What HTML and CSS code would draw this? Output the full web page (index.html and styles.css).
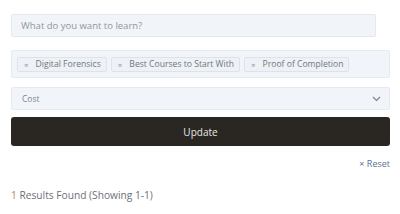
FILE: index.html
```html
<!DOCTYPE html>
<html lang="en">
<head>
    <meta charset="UTF-8">
    <meta name="viewport" content="width=device-width, initial-scale=1.0">
    <title>Courses</title>
    <link rel="stylesheet" href="styles.css">
</head>
<body>
    <div class="filters">
        <input class="search" type="text" placeholder="What do you want to learn?">
        <div class="tags">
            <span class="tag"><span class="x">&times;</span>Digital Forensics</span>
            <span class="tag"><span class="x">&times;</span>Best Courses to Start With</span>
            <span class="tag"><span class="x">&times;</span>Proof of Completion</span>
        </div>
        <div class="select">
            <span>Cost</span>
            <svg width="9" height="6" viewBox="0 0 9 6"><path d="M1 1 L4.5 4.5 L8 1" fill="none" stroke="#7d828b" stroke-width="1.2"/></svg>
        </div>
        <button class="update">Update</button>
        <div class="reset-row"><a class="reset" href="#">&times; Reset</a></div>
        <p class="results"><span class="count">1</span> Results Found (Showing 1-1)</p>
    </div>
</body>
</html>
```

FILE: styles.css
```css
body {
    margin: 0;
    font-family: 'Open Sans', sans-serif;
    background-color: #fff;
    color: #6b7079;
}
.filters {
    padding: 14px 10px 0 11px;
    display: flex;
    flex-direction: column;
}
.search {
    width: 365px;
    height: 23px;
    box-sizing: border-box;
    border: 1px solid #e4e9ef;
    background-color: #f1f4f8;
    border-radius: 2px;
    padding: 0 9px;
    font-family: inherit;
    font-size: 9.5px;
    outline: none;
}
.search::placeholder {
    color: #9097a0;
}
.tags {
    margin-top: 13px;
    height: 28px;
    box-sizing: border-box;
    border: 1px solid #e6eaef;
    background-color: #f1f4f8;
    border-radius: 2px;
    padding: 6px 5px;
    display: flex;
    gap: 4px;
}
.tag {
    height: 15px;
    box-sizing: border-box;
    border: 1px solid #dfe3e8;
    background-color: #eef1f5;
    border-radius: 2px;
    padding: 0 5px 0 6px;
    font-size: 8.6px;
    line-height: 13px;
    color: #727780;
    display: flex;
    align-items: center;
}
.tag .x {
    font-size: 8px;
    margin-right: 7px;
    color: #8a8f98;
}
.select {
    margin-top: 9px;
    height: 23px;
    box-sizing: border-box;
    border: 1px solid #e6eaef;
    background-color: #f1f4f8;
    border-radius: 2px;
    padding: 0 8px 0 10px;
    font-size: 8.5px;
    color: #80868f;
    display: flex;
    align-items: center;
    justify-content: space-between;
}
.update {
    margin-top: 7px;
    height: 29px;
    border: none;
    border-radius: 3px;
    background-color: #2a2722;
    color: #e8e8e8;
    font-family: inherit;
    font-size: 10px;
}
.reset-row {
    margin-top: 11px;
    display: flex;
    justify-content: flex-end;
}
.reset {
    font-size: 9px;
    color: #63708f;
    text-decoration: none;
}
.results {
    margin: 18px 0 0;
    font-size: 10.2px;
    color: #6d7078;
}
.count {
    color: #b98550;
}
```
